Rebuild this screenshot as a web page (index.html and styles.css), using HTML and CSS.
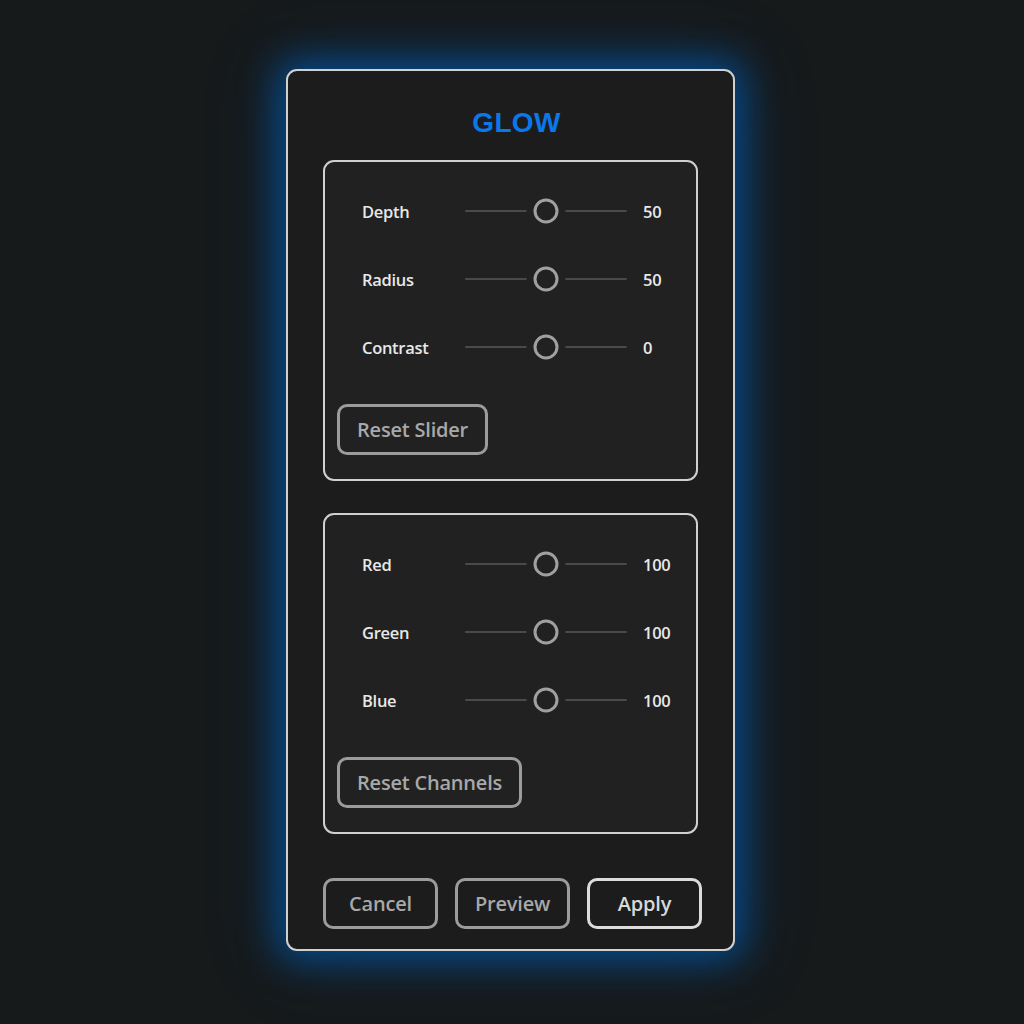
FILE: index.html
```html
<!DOCTYPE html>
<html lang="en">
<head>
<meta charset="utf-8">
<title>Glow</title>
<link rel="stylesheet" href="styles.css">
</head>
<body>
<div class="panel">
  <h1 class="title">GLOW</h1>
  <section class="card">
    <div class="row"><span class="label">Depth</span><div class="track"><div class="thumb" style="left:50%"></div></div><span class="value">50</span></div>
    <div class="row"><span class="label">Radius</span><div class="track"><div class="thumb" style="left:50%"></div></div><span class="value">50</span></div>
    <div class="row"><span class="label">Contrast</span><div class="track"><div class="thumb" style="left:50%"></div></div><span class="value">0</span></div>
    <button class="btn reset">Reset Slider</button>
  </section>
  <section class="card">
    <div class="row"><span class="label">Red</span><div class="track"><div class="thumb" style="left:50%"></div></div><span class="value">100</span></div>
    <div class="row"><span class="label">Green</span><div class="track"><div class="thumb" style="left:50%"></div></div><span class="value">100</span></div>
    <div class="row"><span class="label">Blue</span><div class="track"><div class="thumb" style="left:50%"></div></div><span class="value">100</span></div>
    <button class="btn reset">Reset Channels</button>
  </section>
  <div class="actions">
    <button class="btn action">Cancel</button>
    <button class="btn action">Preview</button>
    <button class="btn action primary">Apply</button>
  </div>
</div>
</body>
</html>
```

FILE: styles.css
```css
html, body {
  margin: 0;
  padding: 0;
}
body {
  background: #161a1b;
  min-height: 100vh;
  display: flex;
  justify-content: center;
  align-items: flex-start;
  padding-right: 3px;
  box-sizing: border-box;
  font-family: "Open Sans", "Noto Sans", sans-serif;
}
.panel {
  margin-top: 69px;
  width: 449px;
  box-sizing: border-box;
  background: #1c1c1c;
  border: 2px solid #d0d0d0;
  border-radius: 11px;
  padding: 25px 35px 20px 35px;
  box-shadow: 0 0 36px 9px rgba(0, 95, 185, 0.65), 0 0 70px 12px rgba(0, 80, 160, 0.22);
  display: flex;
  flex-direction: column;
}
.title {
  margin: 0;
  height: 64px;
  padding-left: 12px;
  text-align: center;
  font-family: "Liberation Sans", Arial, sans-serif;
  font-weight: 700;
  font-size: 28px;
  line-height: 54px;
  color: #0a78ea;
  letter-spacing: 0.3px;
}
.card {
  background: #212121;
  border: 2px solid #d0d0d0;
  border-radius: 11px;
  padding: 15px 0 24px 12px;
  display: flex;
  flex-direction: column;
  align-items: flex-start;
}
.card + .card {
  margin-top: 32px;
}
.row {
  height: 68px;
  display: flex;
  align-items: center;
  width: 100%;
}
.label {
  width: 103px;
  padding-left: 25px;
  font-size: 16.5px;
  font-weight: 600;
  letter-spacing: -0.3px;
  color: #e8e8e8;
}
.track {
  position: relative;
  width: 162px;
  height: 2.5px;
  background: #4a4a4a;
  border-radius: 2px;
}
.thumb {
  position: absolute;
  top: 50%;
  width: 25px;
  height: 25px;
  box-sizing: border-box;
  border: 3px solid #a0a0a0;
  border-radius: 50%;
  background: #212121;
  transform: translate(-50%, -50%);
  box-shadow: 0 0 0 7px #212121;
}
.value {
  margin-left: 16px;
  font-size: 16.5px;
  font-weight: 600;
  letter-spacing: -0.3px;
  color: #e8e8e8;
}
.btn {
  font-family: "Open Sans", "Noto Sans", sans-serif;
  background: transparent;
  border: 3px solid #9c9c9c;
  border-radius: 10px;
  color: #a8a8a8;
  font-size: 20px;
  font-weight: 600;
  letter-spacing: -0.2px;
  height: 51px;
  box-sizing: border-box;
  cursor: pointer;
}
.reset {
  margin-top: 23px;
  padding: 0 17px;
}
.actions {
  margin-top: 44px;
  display: flex;
  gap: 17px;
}
.action {
  flex-shrink: 0;
  width: 115px;
  padding: 0;
}
.primary {
  border-color: #dcdcdc;
  color: #d8d8d8;
}
```
